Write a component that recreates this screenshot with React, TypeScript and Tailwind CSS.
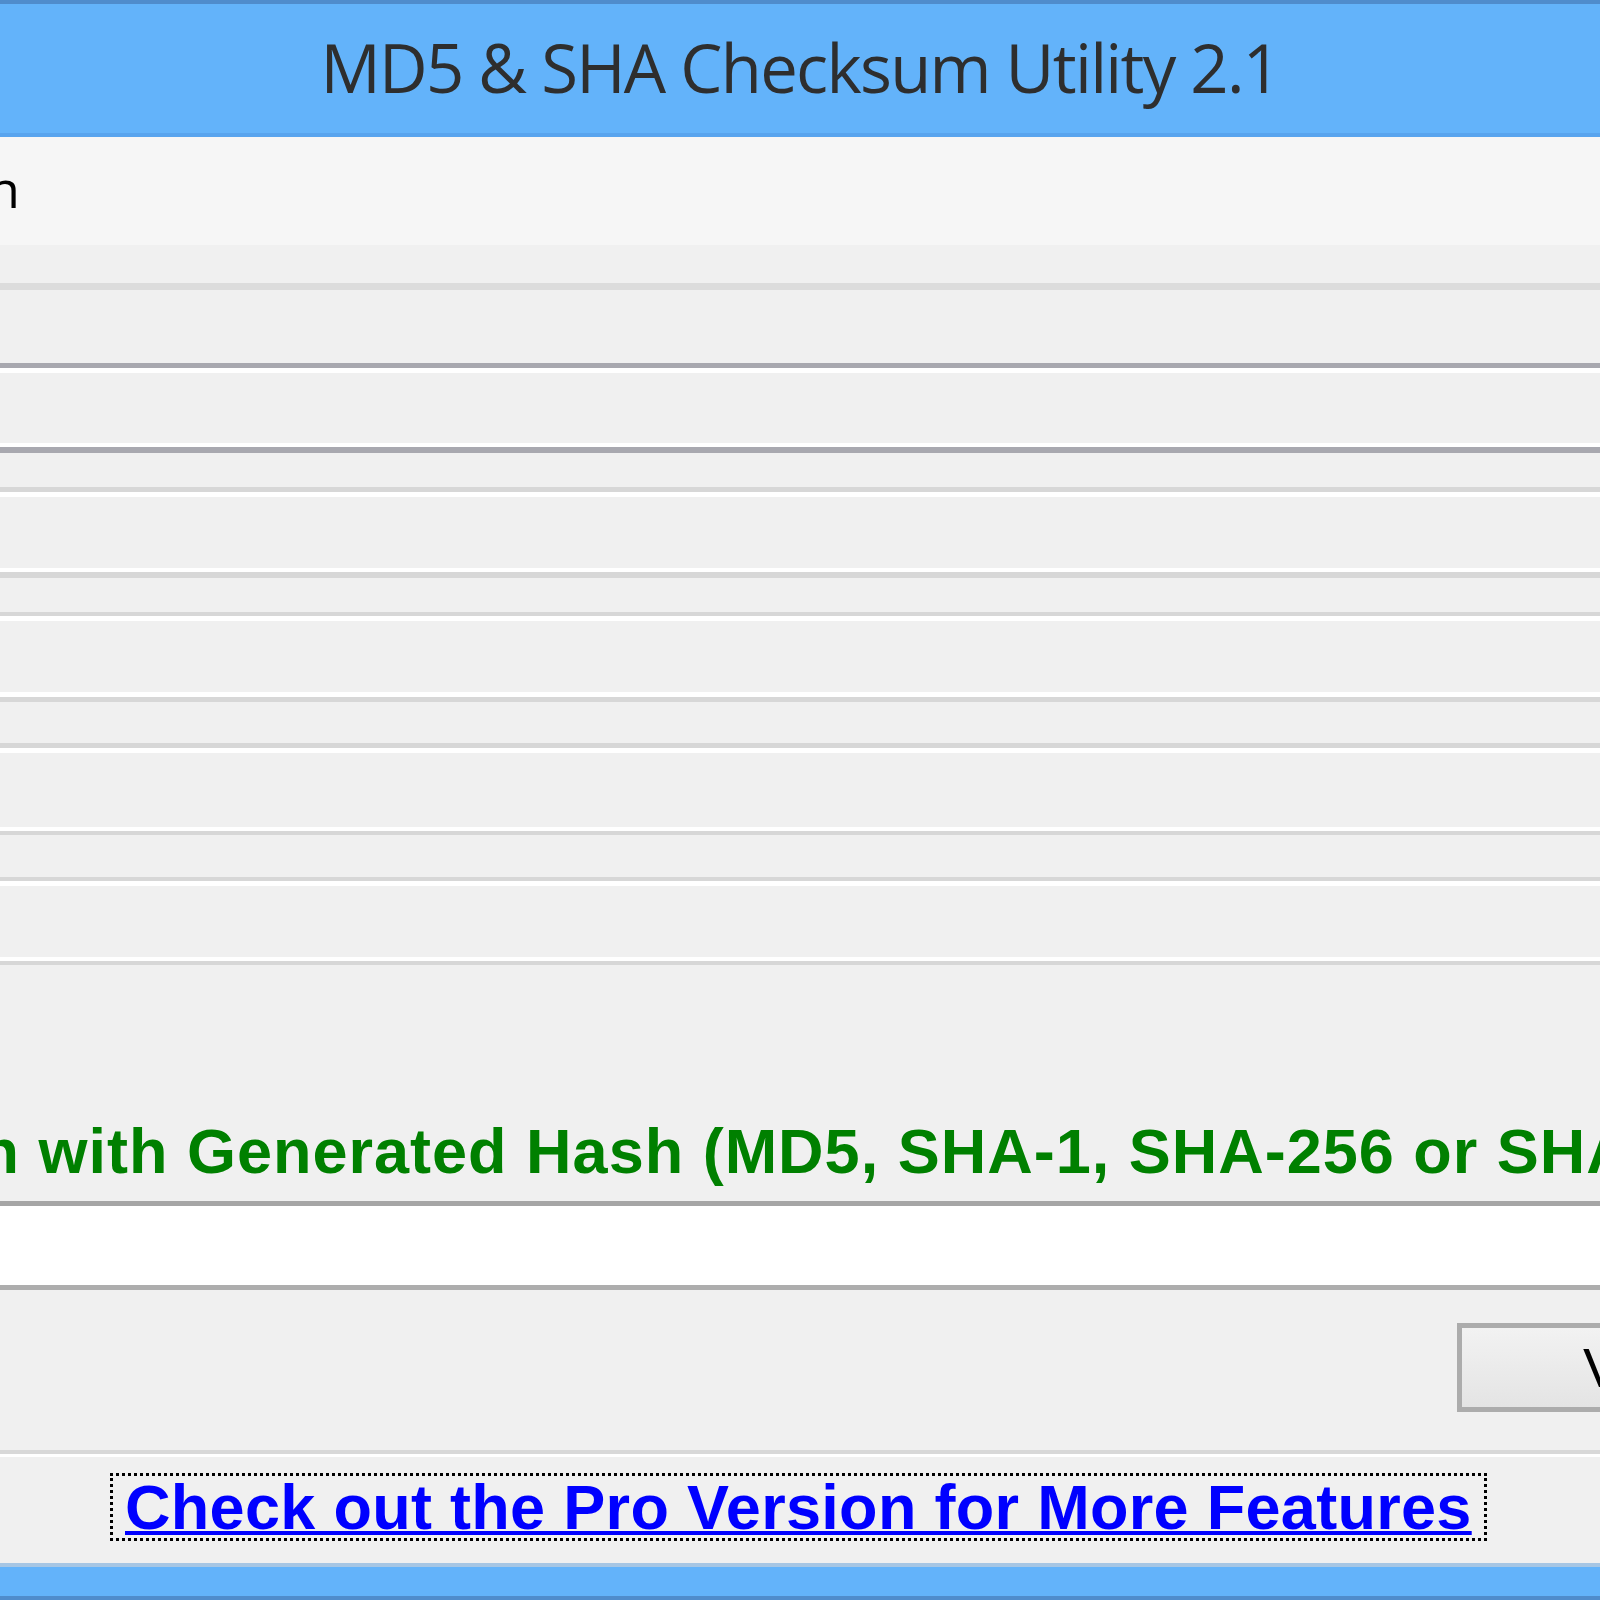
export default function App() {
  return (
    <div className="w-[1600px] h-[1600px] overflow-hidden bg-[#f0f0f0] flex flex-col">
      {/* title bar */}
      <div className="h-[4px] shrink-0 bg-[#4f8ccc]" />
      <div className="h-[129px] shrink-0 bg-[#63b3fa] flex justify-center pt-[30px]">
        <span className="font-['Open_Sans',sans-serif] text-[67px] leading-[67px] tracking-[-1.7px] text-[#2e2e2e] whitespace-nowrap">
          MD5 &amp; SHA Checksum Utility 2.1
        </span>
      </div>
      <div className="h-[4px] shrink-0 bg-[#58a4ee]" />

      {/* menu bar */}
      <div className="h-[108px] shrink-0 bg-[#f6f6f6] flex pt-[25px]">
        <div className="w-[20px] flex justify-end">
          <span className="font-['Open_Sans',sans-serif] text-[52px] leading-[52px] text-black whitespace-nowrap">
            Option
          </span>
        </div>
      </div>

      {/* result fields */}
      <div className="h-[38px] shrink-0" />
      <div className="h-[7px] shrink-0 bg-[#dcdcdc]" />
      <div className="h-[73px] shrink-0" />
      <div className="h-[5px] shrink-0 bg-[#a8a8af]" />
      <div className="h-[5px] shrink-0 bg-white" />
      <div className="h-[70px] shrink-0" />
      <div className="h-[4px] shrink-0 bg-white" />
      <div className="h-[6px] shrink-0 bg-[#a8a8af]" />
      <div className="h-[34px] shrink-0" />
      <div className="h-[5px] shrink-0 bg-[#d7d7d7]" />
      <div className="h-[5px] shrink-0 bg-white" />
      <div className="h-[71px] shrink-0" />
      <div className="h-[4px] shrink-0 bg-white" />
      <div className="h-[6px] shrink-0 bg-[#d7d7d7]" />
      <div className="h-[34px] shrink-0" />
      <div className="h-[4px] shrink-0 bg-[#d7d7d7]" />
      <div className="h-[5px] shrink-0 bg-white" />
      <div className="h-[71px] shrink-0" />
      <div className="h-[5px] shrink-0 bg-white" />
      <div className="h-[5px] shrink-0 bg-[#d7d7d7]" />
      <div className="h-[41px] shrink-0" />
      <div className="h-[5px] shrink-0 bg-[#d7d7d7]" />
      <div className="h-[5px] shrink-0 bg-white" />
      <div className="h-[74px] shrink-0" />
      <div className="h-[4px] shrink-0 bg-white" />
      <div className="h-[4px] shrink-0 bg-[#d7d7d7]" />
      <div className="h-[42px] shrink-0" />
      <div className="h-[4px] shrink-0 bg-[#d7d7d7]" />
      <div className="h-[5px] shrink-0 bg-white" />
      <div className="h-[71px] shrink-0" />
      <div className="h-[4px] shrink-0 bg-white" />
      <div className="h-[4px] shrink-0 bg-[#d7d7d7]" />
      <div className="h-[155px] shrink-0" />

      {/* compare label */}
      <div className="h-[63px] shrink-0 flex font-['Liberation_Sans',Arial,sans-serif] font-bold text-[63px] leading-[63px] tracking-[1px] text-[#008000] whitespace-nowrap">
        <div className="w-[20px] shrink-0 flex justify-end">
          <span>Compare Hash</span>
        </div>
        <span>&nbsp;with Generated Hash (MD5, SHA-1, SHA-256 or SHA-512)</span>
      </div>
      <div className="h-[18px] shrink-0" />

      {/* hash input */}
      <div className="h-[5px] shrink-0 bg-[#a5a5a5]" />
      <div className="h-[79px] shrink-0 bg-white" />
      <div className="h-[5px] shrink-0 bg-[#adadad]" />
      <div className="h-[33px] shrink-0" />

      {/* verify button */}
      <div className="h-[89px] shrink-0 flex pl-[1457px]">
        <div className="w-[400px] shrink-0 border-[5px] border-[#acacac] bg-gradient-to-b from-[#f2f2f2] to-[#e4e4e4] flex items-center pl-[121px]">
          <span className="font-['Liberation_Sans',Arial,sans-serif] text-[56px] leading-[56px] text-black">Verify</span>
        </div>
      </div>
      <div className="h-[38px] shrink-0" />
      <div className="h-[4px] shrink-0 bg-[#d8d8d8]" />
      <div className="h-[3px] shrink-0 bg-white" />
      <div className="h-[16px] shrink-0" />

      {/* pro version link */}
      <div className="h-[68px] shrink-0 flex pl-[110px]">
        <div className="border-[3px] border-dotted border-black pl-[12px] pr-[12px]">
          <span className="block font-['Liberation_Sans',Arial,sans-serif] font-bold text-[63px] leading-[62px] tracking-[0.3px] text-[#0000ff] underline decoration-4 underline-offset-2 whitespace-nowrap">
            Check out the Pro Version for More Features
          </span>
        </div>
      </div>
      <div className="h-[22px] shrink-0" />

      {/* bottom frame */}
      <div className="h-[4px] shrink-0 bg-[#a6c6e4]" />
      <div className="h-[29px] shrink-0 bg-[#63b3fa]" />
      <div className="h-[4px] shrink-0 bg-[#4f8ccc]" />
    </div>
  );
}
